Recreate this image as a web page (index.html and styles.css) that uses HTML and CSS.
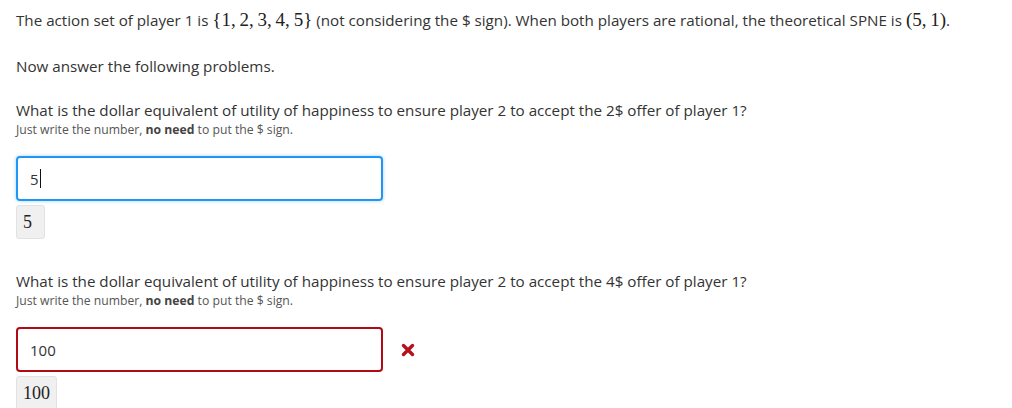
FILE: index.html
```html
<!DOCTYPE html>
<html>
<head>
<meta charset="utf-8">
<link rel="stylesheet" href="styles.css">
</head>
<body>
<div class="page">
  <p class="intro">The action set of player 1 is <span class="math">{1,&#8201;2,&#8201;3,&#8201;4,&#8201;5}</span> (not considering the $ sign). When both players are rational, the theoretical SPNE is <span class="math">(5,&#8201;1)</span>.</p>
  <p class="lead">Now answer the following problems.</p>

  <div class="question">
    <div class="q-text">What is the dollar equivalent of utility of happiness to ensure player 2 to accept the 2$ offer of player 1?</div>
    <div class="q-hint">Just write the number, <b>no need</b> to put the $ sign.</div>
    <div class="answer-row">
      <div class="field focused">5<span class="caret"></span></div>
    </div>
    <div class="preview">5</div>
  </div>

  <div class="question second">
    <div class="q-text">What is the dollar equivalent of utility of happiness to ensure player 2 to accept the 4$ offer of player 1?</div>
    <div class="q-hint">Just write the number, <b>no need</b> to put the $ sign.</div>
    <div class="answer-row">
      <div class="field wrong">100</div>
      <svg class="cross" width="14" height="14" viewBox="0 0 14 14"><path d="M2.5 2.5 L11.5 11.5 M11.5 2.5 L2.5 11.5" stroke="#b5121b" stroke-width="3.4" stroke-linecap="round"/></svg>
    </div>
    <div class="preview">100</div>
  </div>
</div>
</body>
</html>
```
FILE: styles.css
```css
html, body {
  margin: 0;
  padding: 0;
  background: #ffffff;
}
body {
  font-family: "Open Sans", "Noto Sans", sans-serif;
  color: #333333;
  font-size: 15.2px;
  line-height: 22px;
}
.page {
  padding: 9px 16px 0 16px;
}
p {
  margin: 0;
}
.intro {
  margin-bottom: 24px;
}
.math {
  font-family: "Liberation Serif", "DejaVu Serif", serif;
  font-size: 19px;
  color: #222;
}
.lead {
  margin-bottom: 22px;
}
.q-hint {
  font-size: 12.2px;
  line-height: 18px;
  color: #555;
}
.q-hint b {
  color: #444;
}
.answer-row {
  display: flex;
  align-items: center;
  gap: 18px;
  margin-top: 17px;
}
.field {
  box-sizing: border-box;
  width: 367px;
  height: 45px;
  border-radius: 4px;
  border: 2px solid #ccc;
  padding: 0 12px;
  display: flex;
  align-items: center;
  font-size: 15px;
  color: #333;
}
.field.focused {
  border-color: #2196f3;
  box-shadow: 0 0 3px 1px rgba(33, 150, 243, 0.25);
}
.field.wrong {
  border-color: #b00a14;
}
.caret {
  display: inline-block;
  width: 1px;
  height: 19px;
  background: #111;
  margin-left: 1px;
}
.preview {
  display: inline-block;
  margin-top: 4px;
  box-sizing: border-box;
  height: 34px;
  min-width: 29px;
  padding: 0 6px;
  background: #f0f0f0;
  border: 1px solid #e2e2e2;
  border-radius: 3px;
  font-family: "Liberation Serif", "DejaVu Serif", serif;
  font-size: 18px;
  line-height: 32px;
  color: #222;
}
.question.second {
  margin-top: 31px;
}
.cross {
  display: block;
}
```
